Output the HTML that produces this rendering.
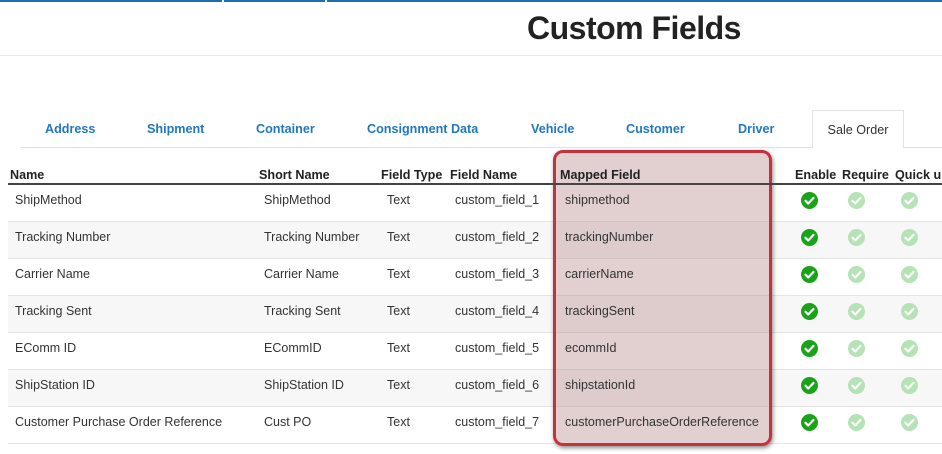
<!DOCTYPE html>
<html><head><style>
body{margin:0;width:942px;height:454px;overflow:hidden;background:#fff;font-family:"Liberation Sans",Arial,sans-serif;position:relative}
.a{position:absolute}
.top{left:0;top:0;width:942px;height:2px;background:#1f6db5}
h1{position:absolute;left:527px;top:10px;margin:0;font-size:32px;font-weight:bold;color:#222;letter-spacing:-0.5px}
.hdr{left:0;top:55px;width:942px;height:1px;background:#e8e8e8}
.tab{position:absolute;top:122px;font-size:12.6px;font-weight:bold;color:#1f78c1;white-space:nowrap}
.tabline{left:20px;top:147px;width:922px;height:1px;background:#e3e3e3}
.sel{left:812px;top:110px;width:92px;height:38px;border:1px solid #e3e3e3;border-bottom:none;background:#fff;box-sizing:border-box;text-align:center;line-height:38px;font-size:12.6px;color:#333}
.th{position:absolute;top:168px;font-size:12.6px;font-weight:bold;color:#222;white-space:nowrap}
.thline{left:8px;top:183px;width:934px;height:2px;background:#444}
.row{position:absolute;left:8px;width:934px;height:37px;border-bottom:1px solid #e4e4e4;box-sizing:border-box}
.td{position:absolute;font-size:12.5px;color:#333;white-space:nowrap}
.box{left:553px;top:150px;width:219px;height:296px;border:3px solid #c4323c;border-radius:10px;background:rgba(190,150,150,0.45);box-sizing:border-box;box-shadow:1px 2px 4px rgba(0,0,0,0.45)}
.ck{position:absolute;width:17px;height:17px;border-radius:50%}
.ck svg{display:block}
</style></head><body>
<div class="a top"></div>
<div class="a" style="left:222px;top:0;width:2px;height:2px;background:#fff"></div>
<div class="a" style="left:325px;top:0;width:2px;height:2px;background:#fff"></div>
<h1>Custom Fields</h1>
<div class="a hdr"></div>
<div class="tab" style="left:45px">Address</div>
<div class="tab" style="left:147px">Shipment</div>
<div class="tab" style="left:256px">Container</div>
<div class="tab" style="left:367px">Consignment Data</div>
<div class="tab" style="left:531px">Vehicle</div>
<div class="tab" style="left:626px">Customer</div>
<div class="tab" style="left:738px">Driver</div>
<div class="a tabline"></div>
<div class="a sel">Sale Order</div>

<div id="rows"></div>
<div class="a box"></div>

<div class="th" style="left:10px">Name</div>
<div class="th" style="left:259px">Short Name</div>
<div class="th" style="left:381px">Field Type</div>
<div class="th" style="left:450px">Field Name</div>
<div class="th" style="left:560px">Mapped Field</div>
<div class="th" style="left:795px">Enable</div>
<div class="th" style="left:842px">Require</div>
<div class="th" style="left:895px">Quick u</div>
<div class="a thline"></div>

<script>
var d=[["ShipMethod","ShipMethod","shipmethod"],["Tracking Number","Tracking Number","trackingNumber"],["Carrier Name","Carrier Name","carrierName"],["Tracking Sent","Tracking Sent","trackingSent"],["EComm ID","ECommID","ecommId"],["ShipStation ID","ShipStation ID","shipstationId"],["Customer Purchase Order Reference","Cust PO","customerPurchaseOrderReference"]];
var h="";
function ck(x,y,c){return '<div class="ck" style="left:'+x+'px;top:'+y+'px;background:'+c+'"><svg width="17" height="17"><path d="M4.5 8.8l2.7 2.7 5.3-5.6" fill="none" stroke="#fff" stroke-width="2.2" stroke-linecap="round" stroke-linejoin="round"/></svg></div>';}
for(var i=0;i<7;i++){var t=185+i*37;
h+='<div class="row" style="top:'+t+'px;background:'+(i%2?'#f7f7f7':'#fff')+'"></div>';
var y=t+8;
h+='<div class="td" style="left:15px;top:'+y+'px">'+d[i][0]+'</div>';
h+='<div class="td" style="left:264px;top:'+y+'px">'+d[i][1]+'</div>';
h+='<div class="td" style="left:387px;top:'+y+'px">Text</div>';
h+='<div class="td" style="left:455px;top:'+y+'px">custom_field_'+(i+1)+'</div>';
h+='<div class="td" style="left:565px;top:'+y+'px;z-index:2">'+d[i][2]+'</div>';
h+=ck(801,t+7,'#1aa31a')+ck(848,t+7,'#b5e3b5')+ck(901,t+7,'#b5e3b5');}
document.getElementById('rows').outerHTML=h;
</script>
</body></html>
